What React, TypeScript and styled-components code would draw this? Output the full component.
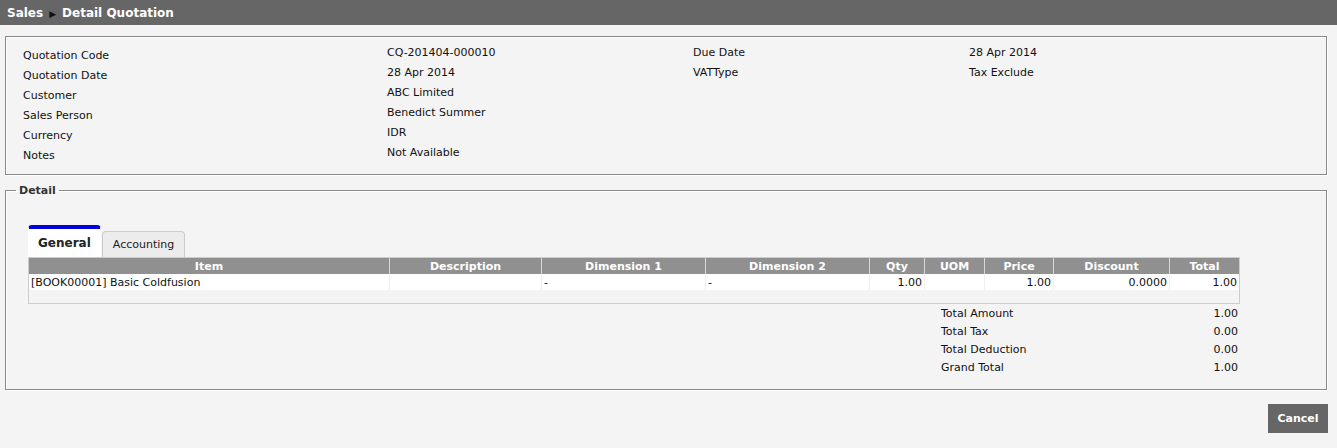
import * as React from 'react';

import styled, { createGlobalStyle } from 'styled-components';

const GlobalStyle = createGlobalStyle`
  html, body {
    margin: 0;
    padding: 0;
    background-color: #f4f4f4;
    font-family: 'DejaVu Sans', Verdana, sans-serif;
    font-size: 11px;
    color: #111111;
  }
`;

const Header = styled.div`
  height: 25px;
  background-color: #666666;
  color: #ffffff;

  display: flex;
  align-items: center;
  gap: 6px;

  padding-left: 7px;

  font-weight: bold;
  font-size: 12px;
`;

const Arrow = styled.span`
  font-size: 9px;
  color: #111111;
  margin-top: 2px;
`;

const Page = styled.div`
  padding: 11px 10px 0 5px;
`;

const InfoBox = styled.div`
  border: 1px solid #8a8a8a;
  box-shadow: inset 1px 1px 0 #ffffff, 1px 1px 0 #ffffff;
  padding: 6px 0 8px 17px;

  display: grid;
  grid-template-columns: 364px 306px 276px 1fr;
`;

const InfoColumn = styled.div<{ $offset?: boolean }>`
  display: flex;
  flex-direction: column;
  padding-top: ${(p) => (p.$offset ? '3px' : '0')};
`;

const InfoCell = styled.div`
  height: 20px;
  line-height: 20px;
  white-space: nowrap;
`;

const DetailSet = styled.fieldset`
  min-width: 0;
  margin: 9px 0 0 0;
  border: 1px solid #8a8a8a;
  box-shadow: inset 1px 1px 0 #ffffff, 1px 1px 0 #ffffff;
  padding: 29px 86px 12px 22px;
`;

const Legend = styled.legend`
  font-weight: bold;
  padding: 0 3px;
  margin-left: -12px;
  color: #333333;
`;

const Tabs = styled.div`
  display: flex;
  align-items: flex-end;
  gap: 1px;
  height: 31px;
`;

const Tab = styled.div<{ $active?: boolean }>`
  height: ${(p) => (p.$active ? '28px' : '25px')};
  padding: 0 ${(p) => (p.$active ? '9px' : '10px')};

  display: flex;
  align-items: center;

  background-color: ${(p) => (p.$active ? '#ffffff' : '#ececec')};
  border: 1px solid ${(p) => (p.$active ? '#ffffff' : '#cccccc')};
  border-top: ${(p) => (p.$active ? '4px solid #0000e0' : '1px solid #cccccc')};
  border-bottom: none;
  border-radius: 4px 4px 0 0;

  font-weight: ${(p) => (p.$active ? 'bold' : 'normal')};
  font-size: ${(p) => (p.$active ? '12px' : '11px')};
  color: #222222;
`;

const TableWrap = styled.div`
  border: 1px solid #cccccc;
  height: 45px;
  background-color: #f4f4f4;
`;

const Table = styled.table`
  width: 100%;
  border-collapse: collapse;
  table-layout: fixed;
`;

const Th = styled.th<{ $w?: number }>`
  width: ${(p) => (p.$w ? `${p.$w}px` : 'auto')};
  height: 16px;
  padding: 0;
  background-color: #909090;
  color: #ffffff;
  font-weight: bold;
  text-align: center;
  border-left: 1px solid #d8d8d8;
  &:first-child {
    border-left: none;
  }
`;

const Td = styled.td<{ $right?: boolean }>`
  height: 16px;
  padding: 0 2px;
  background-color: #ffffff;
  text-align: ${(p) => (p.$right ? 'right' : 'left')};
  border-left: 1px solid #f0f0f0;
  white-space: nowrap;
  &:first-child {
    border-left: none;
  }
`;

const Totals = styled.div`
  display: grid;
  grid-template-columns: 200px 97px;
  justify-content: end;
  margin-top: 1px;
  padding-right: 2px;
`;

const TotalCell = styled.div<{ $right?: boolean }>`
  height: 18px;
  line-height: 18px;
  text-align: ${(p) => (p.$right ? 'right' : 'left')};
`;

const Footer = styled.div`
  display: flex;
  justify-content: flex-end;
  padding-top: 14px;
  margin-right: -1px;
`;

const CancelButton = styled.button`
  width: 60px;
  height: 29px;
  border: none;
  background-color: #666666;
  color: #ffffff;
  font-family: 'DejaVu Sans', Verdana, sans-serif;
  font-weight: bold;
  font-size: 11px;
`;

const labels = ['Quotation Code', 'Quotation Date', 'Customer', 'Sales Person', 'Currency', 'Notes'];
const values = ['CQ-201404-000010', '28 Apr 2014', 'ABC Limited', 'Benedict Summer', 'IDR', 'Not Available'];

const columns = [
  { name: 'Item', w: 360 },
  { name: 'Description', w: 151 },
  { name: 'Dimension 1', w: 163 },
  { name: 'Dimension 2', w: 163 },
  { name: 'Qty', w: 54 },
  { name: 'UOM', w: 59 },
  { name: 'Price', w: 68 },
  { name: 'Discount', w: 115 },
  { name: 'Total' },
];

const totals = [
  ['Total Amount', '1.00'],
  ['Total Tax', '0.00'],
  ['Total Deduction', '0.00'],
  ['Grand Total', '1.00'],
];

const App: React.FC = () => {
  return (
    <>
      <GlobalStyle />
      <Header>
        <span>Sales</span>
        <Arrow>▶</Arrow>
        <span>Detail Quotation</span>
      </Header>
      <Page>
        <InfoBox>
          <InfoColumn $offset>
            {labels.map((l) => (
              <InfoCell key={l}>{l}</InfoCell>
            ))}
          </InfoColumn>
          <InfoColumn>
            {values.map((v) => (
              <InfoCell key={v}>{v}</InfoCell>
            ))}
          </InfoColumn>
          <InfoColumn>
            <InfoCell>Due Date</InfoCell>
            <InfoCell>VATType</InfoCell>
          </InfoColumn>
          <InfoColumn>
            <InfoCell>28 Apr 2014</InfoCell>
            <InfoCell>Tax Exclude</InfoCell>
          </InfoColumn>
        </InfoBox>

        <DetailSet>
          <Legend>Detail</Legend>
          <Tabs>
            <Tab $active>General</Tab>
            <Tab>Accounting</Tab>
          </Tabs>
          <TableWrap>
            <Table>
              <thead>
                <tr>
                  {columns.map((c) => (
                    <Th key={c.name} $w={c.w}>
                      {c.name}
                    </Th>
                  ))}
                </tr>
              </thead>
              <tbody>
                <tr>
                  <Td>[BOOK00001] Basic Coldfusion</Td>
                  <Td></Td>
                  <Td>-</Td>
                  <Td>-</Td>
                  <Td $right>1.00</Td>
                  <Td></Td>
                  <Td $right>1.00</Td>
                  <Td $right>0.0000</Td>
                  <Td $right>1.00</Td>
                </tr>
              </tbody>
            </Table>
          </TableWrap>
          <Totals>
            {totals.map(([l, v]) => (
              <React.Fragment key={l}>
                <TotalCell>{l}</TotalCell>
                <TotalCell $right>{v}</TotalCell>
              </React.Fragment>
            ))}
          </Totals>
        </DetailSet>

        <Footer>
          <CancelButton>Cancel</CancelButton>
        </Footer>
      </Page>
    </>
  );
};

export default App;
